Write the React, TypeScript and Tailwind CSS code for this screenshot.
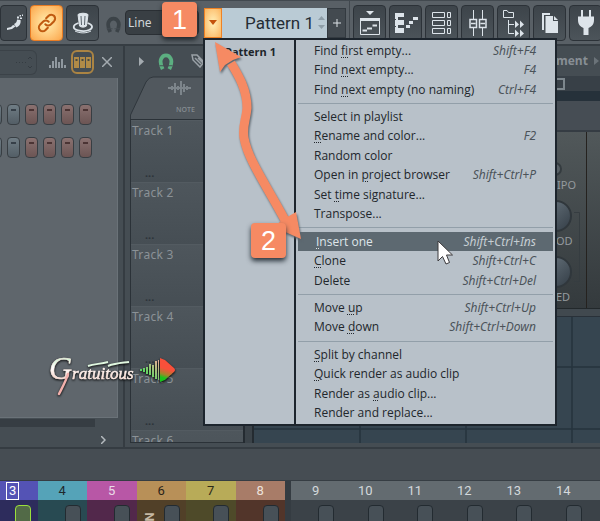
import React from 'react';

interface MenuRow {
  label: string;
  // index of the underlined access key, -1 for none
  mark: number;
  keys?: string;
  active?: boolean;
}

const menuGroups: MenuRow[][] = [
  [
    { label: 'Find first empty...', mark: 5, keys: 'Shift+F4' },
    { label: 'Find next empty...', mark: 5, keys: 'F4' },
    { label: 'Find next empty (no naming)', mark: 5, keys: 'Ctrl+F4' },
  ],
  [
    { label: 'Select in playlist', mark: -1 },
    { label: 'Rename and color...', mark: 0, keys: 'F2' },
    { label: 'Random color', mark: -1 },
    { label: 'Open in project browser', mark: 8, keys: 'Shift+Ctrl+P' },
    { label: 'Set time signature...', mark: 4 },
    { label: 'Transpose...', mark: -1 },
  ],
  [
    { label: 'Insert one', mark: 0, keys: 'Shift+Ctrl+Ins', active: true },
    { label: 'Clone', mark: 0, keys: 'Shift+Ctrl+C' },
    { label: 'Delete', mark: -1, keys: 'Shift+Ctrl+Del' },
  ],
  [
    { label: 'Move up', mark: 5, keys: 'Shift+Ctrl+Up' },
    { label: 'Move down', mark: 5, keys: 'Shift+Ctrl+Down' },
  ],
  [
    { label: 'Split by channel', mark: 0 },
    { label: 'Quick render as audio clip', mark: 0 },
    { label: 'Render as audio clip...', mark: 10 },
    { label: 'Render and replace...', mark: -1 },
  ],
];

const tracks = ['Track 1', 'Track 2', 'Track 3', 'Track 4', 'Track 5', 'Track 6'];

const colorSteps = [
  { n: 3, head: 'bg-[#5453b5] text-white', body: 'bg-[#2d2c5c]' },
  { n: 4, head: 'bg-[#55a3b8] text-[#20282c]', body: 'bg-[#284a52]' },
  { n: 5, head: 'bg-[#b857a6] text-[#eadbe8]', body: 'bg-[#52284b]' },
  { n: 6, head: 'bg-[#b89058] text-[#2b2418]', body: 'bg-[#514028]' },
  { n: 7, head: 'bg-[#b8ab58] text-[#2b2918]', body: 'bg-[#4e4a29]' },
  { n: 8, head: 'bg-[#a87c68] text-[#eee2dc]', body: 'bg-[#52352a]' },
];

const plainSteps = [9, 10, 11, 12, 13, 14];

const ToolButton: React.FC<{ label: string; className?: string; children: React.ReactNode }> = ({ label, className, children }) => (
  <button
    type="button"
    aria-label={label}
    className={`h-9 shrink-0 flex items-center justify-center rounded-sm border border-[#2c3238] text-[#dde4ea] ${className ?? 'w-[33px] bg-linear-to-b from-[#3d444a] to-[#4c545a]'}`}
  >
    {children}
  </button>
);

const Magnet: React.FC<{ className: string }> = ({ className }) => (
  <svg viewBox="0 0 16 18" className={className} fill="none" stroke="currentColor" strokeWidth="4">
    <path d="M4.5 17 C2 12 1.5 9 3 6 C5 1.5 11 1.5 13 6 C14.500 9 14 12 11.500 17" />
    <path d="M1 13.500 H7 M9 13.500 H15" stroke="#444c52" strokeWidth="1" />
  </svg>
);

const Toolbar: React.FC = () => (
  <header className="h-[46px] flex items-center border-t border-b-2 border-t-[#42494f] border-b-[#363d43] bg-[#596066] overflow-hidden">
    <div className="flex gap-[3px] shrink-0">
      <ToolButton label="Typing keyboard" className="w-[27px] bg-[#434a50]">
        <svg viewBox="0 0 20 20" className="w-5 h-5" fill="currentColor">
          <path d="M3 17 L3 15 L7 14 L9 12 L12 13 L8 16 Z" />
          <path d="M10 11 C12 10 13 8.500 13 6.500 L16.500 7 C17 10 16 13 12.500 14.500 Z" />
          <path d="M13 3.500 H15 V5.500 H13 Z M15.500 2 H17 V3.500 H15.500 Z M16 4.500 H18 V6 H16 Z M18 1.500 H19 V3 H18 Z" />
        </svg>
      </ToolButton>
      <ToolButton label="Link" className="w-[33px] bg-radial from-[#fff0b0] to-[#fba648] !border-[#e87c24] !text-[#c05a10]">
        <svg viewBox="0 0 24 24" className="w-5 h-5" fill="none" stroke="currentColor" strokeWidth="2.500" strokeLinecap="round">
          <path d="M10 13.500 a4.500 4.500 0 0 0 6.500 .3 l4-4 a4.600 4.600 0 0 0 -6.500 -6.500 l-3 3" />
          <path d="M14 10.500 a4.500 4.500 0 0 0 -6.500 -.3 l-4 4 a4.600 4.600 0 0 0 6.500 6.500 l3 -3" />
        </svg>
      </ToolButton>
      <ToolButton label="Magic hat">
        <svg viewBox="0 0 22 22" className="w-[22px] h-[22px]" fill="none" stroke="currentColor">
          <path d="M6 2.500 L7.500 14 C9 15.500 13 15.500 14.500 14 L16 2.500 C14 .8 8 .8 6 2.500 Z" fill="currentColor" />
          <path d="M9 4 L9.500 13 M13 4 L12.500 13" stroke="#59636b" />
          <path d="M6.500 11 C0 13 .5 17 6 18.300 C10 19.300 14 19.300 17 18 C21.500 16 21 12.500 15.500 11" strokeWidth="1.800" />
          <path d="M3 19 C8 21.500 14 21.500 19 19" />
        </svg>
      </ToolButton>
    </div>
    <Magnet className="w-[15px] h-[17px] mt-1 ml-[7px] shrink-0 text-[#3c4348]" />
    <label className="sr-only" htmlFor="snap">Snap</label>
    <select
      id="snap"
      defaultValue="Line"
      className="appearance-none ml-[4px] w-[74px] h-[25px] shrink-0 pl-[2px] rounded-sm border border-[#2a2f34] bg-[#393f44] text-[#d0d5d9] text-[12px] font-['Noto_Sans']"
    >
      <option>Line</option>
    </select>
    <div className="flex h-[30px] ml-[5px] shrink-0">
      <button type="button" aria-label="Pattern menu" className="w-[18px] flex items-center justify-center border border-[#ee8225] bg-radial from-[#fff0b8] to-[#fbb45c]">
        <svg viewBox="0 0 8 5" className="w-2 h-[5px]" fill="#c4520c"><path d="M0 0 H8 L4 5 Z" /></svg>
      </button>
      <div className="w-[105px] flex items-center justify-end gap-1 pr-[2px] bg-[#bacbd5] text-[#252d35]">
        <span className="text-[17px] leading-6 whitespace-nowrap font-['Roboto',sans-serif]">Pattern 1</span>
        <svg viewBox="0 0 7 13" className="w-[7px] h-[13px]" fill="#8e9ea8"><path d="M0 4 L3.500 0 L7 4 Z M0 9 L3.500 13 L7 9 Z" /></svg>
      </div>
      <button type="button" aria-label="Add pattern" className="w-[19px] flex items-center justify-center border border-[#333a40] bg-[#434a50]">
        <svg viewBox="0 0 8 8" className="w-2 h-2" stroke="#dde2e6" strokeWidth="1"><path d="M4 0 V8 M0 4 H8" /></svg>
      </button>
    </div>
    <div className="w-px h-full ml-[3px] shrink-0 bg-[#41484e]" />
    <div className="flex gap-[3px] ml-[3px] shrink-0">
      <ToolButton label="Playlist">
        <svg viewBox="0 0 22 26" className="w-[22px] h-[26px]" fill="none" stroke="currentColor">
          <path d="M7 1 H15 L11 5 Z" fill="currentColor" stroke="none" />
          <path d="M1.500 9 H20.500 V24.500 H1.500 Z" />
          <path d="M1 9.500 H21" strokeWidth="3" />
          <path d="M3.500 20.500 H8 M8 18.500 H13 M13.500 15.500 H18" strokeWidth="2" />
        </svg>
      </ToolButton>
      <ToolButton label="Piano roll">
        <svg viewBox="0 0 24 20" className="w-6 h-5" fill="currentColor">
          <path d="M1 0 H10 V4 H4 V7 H10 V12 H4 V15 H10 V20 H1 V14 H2 V13 H1 V7 H2 V6 H1 Z" />
          <path d="M12 12 H16 V15 H12 Z M15 8 H19 V11 H15 Z M19 4 H24 V7 H19 Z" />
        </svg>
      </ToolButton>
      <ToolButton label="Channel rack">
        <svg viewBox="0 0 19 22" className="w-[19px] h-[22px]" fill="none" stroke="currentColor">
          <path d="M.5 .5 H12.500 V5.500 H.5 Z M.5 8.500 H12.500 V13.500 H.5 Z M.5 16.500 H12.500 V21.500 H.5 Z" />
          <path d="M15.500 .5 H18.500 V5.500 H15.500 Z M15.500 8.500 H18.500 V13.500 H15.500 Z M15.500 16.500 H18.500 V21.500 H15.500 Z" />
        </svg>
      </ToolButton>
      <ToolButton label="Mixer">
        <svg viewBox="0 0 18 26" className="w-[18px] h-[26px]" fill="none" stroke="currentColor">
          <path d="M1 9.500 H7.500 V17.500 H1 Z M10.500 9.500 H17 V17.500 H10.500 Z M2 13.500 H6.500 M11.500 13.500 H16" strokeWidth="1.500" />
          <path d="M4.500 0 V9 M13.500 0 V9 M4.500 18 V26 M13.500 18 V26" />
        </svg>
      </ToolButton>
      <ToolButton label="Browser">
        <svg viewBox="0 0 22 28" className="w-[22px] h-7" fill="none" stroke="currentColor">
          <path d="M.5 1.500 H4 L5.500 3.500 H10.500 V8.500 H.5 Z M5.500 11 V24.500 H11 M5.500 15.500 H11" />
          <path d="M12 11.500 L16 15.500 L12 19 Z M17 11.500 L21 15.500 L17 19 Z M12 20.500 L16 24.500 L12 28 Z M17 20.500 L21 24.500 L17 28 Z" fill="currentColor" stroke="none" />
        </svg>
      </ToolButton>
      <ToolButton label="Project files">
        <svg viewBox="0 0 18 22" className="w-[18px] h-[22px]" fill="currentColor">
          <path d="M1 1 H9 V3 H3 V18 H1 Z" />
          <path d="M4.500 4 H12 V9 H17 V21 H4.500 Z M13 4 L17 8 H13 Z" />
        </svg>
      </ToolButton>
      <ToolButton label="Plugins">
        <svg viewBox="0 0 16 26" className="w-4 h-[26px]" fill="currentColor">
          <path d="M3 0 H5 V7 H3 Z M11 0 H13 V7 H11 Z M0 6.500 H16 V10 C16 15 13 17 10.500 18 V25 H5.500 V18 C3 17 0 15 0 10 Z" />
        </svg>
      </ToolButton>
    </div>
  </header>
);

const Pads: React.FC = () => (
  <div className="flex gap-[5px] -ml-[11px]">
    {[0, 1, 2, 3, 4, 5].map(i => (
      <div
        key={i}
        className={`w-[13px] h-[21px] shrink-0 pt-1 px-[3px] rounded-sm border border-[#383e43] ${i < 2 ? 'bg-linear-to-b from-[#707d85] to-[#535e66]' : 'bg-linear-to-b from-[#8a7170] to-[#6c5554]'}`}
      >
        <div className={i < 2 ? 'h-[2px] bg-[#363f48]' : 'h-[2px] bg-[#4b3434]'} />
      </div>
    ))}
  </div>
);

const ChannelRack: React.FC = () => (
  <section className="w-[123px] shrink-0 flex flex-col bg-[#454d53] overflow-hidden">
    <div className="h-8 flex items-center">
      <div className="w-[37px] h-[25px] flex items-center justify-end pr-[3px] rounded-r-md border border-l-0 border-[#3b4248] text-[#353c42]">
        <svg viewBox="0 0 17 13" className="w-[17px] h-[13px]" fill="none" stroke="currentColor">
          <path d="M0 6.500 H11" strokeDasharray="1 2" />
          <path d="M12 3 L14 1 L16 3 M12 10 L14 12 L16 10" />
        </svg>
      </div>
      <svg viewBox="0 0 17 12" className="w-[17px] h-3 ml-3" stroke="#9099a0" strokeWidth="2">
        <path d="M1 9 V12 M4 5 V12 M7 1 V12 M10 6 V12 M13 3 V12 M16 9 V12" />
      </svg>
      <div className="w-[23px] h-6 ml-[5px] flex items-center justify-center rounded-md border-2 border-[#ab8443]">
        <svg viewBox="0 0 17 11" className="w-[17px] h-[11px]" fill="#b18b47">
          <path d="M0 0 H5 V11 H0 Z M6 0 H11 V11 H6 Z M12 0 H17 V11 H12 Z" />
          <path d="M1.500 2 H3.500 V4 H1.500 Z M7.500 2 H9.500 V4 H7.500 Z M13.500 2 H15.500 V4 H13.500 Z" fill="#4a4a40" />
        </svg>
      </div>
      <svg viewBox="0 0 10 10" className="w-[10px] h-[10px] ml-2" stroke="#a4abb0" strokeWidth="1.500"><path d="M0 0 L10 10 M10 0 L0 10" /></svg>
    </div>
    <div className="h-[340px] mr-[5px] pt-[26px] flex flex-col gap-3 border-r border-b border-[#6a7278] bg-[#5f666c]">
      <Pads />
      <Pads />
    </div>
    <div className="h-2 w-[95px] mt-px bg-[#363d43]" />
    <div className="flex-1 flex items-center justify-end pt-[6px] pr-[17px]">
      <svg viewBox="0 0 5 8" className="w-[5px] h-2" fill="none" stroke="#b4babe" strokeWidth="1.500"><path d="M0 0 L4 4 L0 8" /></svg>
    </div>
  </section>
);

const Knob: React.FC = () => (
  <div className="w-8 h-8 shrink-0 -ml-[14px] rounded-full border-2 border-[#30373c] bg-linear-to-br from-[#6b7780] to-[#353f48]" />
);

const PluginPanel: React.FC = () => (
  <div className="h-[271px] flex flex-col pl-[311px]">
    <div className="h-[30px] flex items-center gap-[6px] pl-[2px] text-[#888f95] text-[12px] font-bold font-['Open_Sans']">
      <span>ment</span>
      <svg viewBox="0 0 5 8" className="w-[5px] h-2" fill="#6b7379"><path d="M0 0 L5 4 L0 8 Z" /></svg>
    </div>
    <div className="h-[15px] flex items-center bg-[#384047]">
      <div className="w-[11px] h-3 border-2 border-[#7d878d]" />
    </div>
    <div className="h-[10px] bg-[#26313a]" />
    <div className="h-[31px] border-b-2 border-[#353c43] bg-[#464d54]" />
    <div className="h-[177px] flex border-b border-[#22282b] bg-linear-to-b from-[#51585a] to-[#343a3d] overflow-hidden">
      <div className="w-[33px] shrink-0 flex flex-col pt-[30px] border-r border-[#25221f] text-[11px] leading-4 text-[#949a9e] font-['Noto_Sans']">
        <div className="w-[14px] h-[14px] -ml-[6px] rounded-full border-2 border-[#343b3f] bg-[#596166]" />
        <span className="h-6 pt-px pl-[3px]">IPO</span>
        <div className="relative">
          <Knob />
          <svg viewBox="0 0 6 70" className="absolute left-[20px] top-[12px] w-[6px] h-[70px]" fill="none" stroke="#363d41">
            <path d="M0 .5 H5.500 V69.500 H0" />
          </svg>
        </div>
        <span className="h-6 pt-px pl-[2px]">OD</span>
        <Knob />
        <span className="pt-px pl-[2px]">ED</span>
      </div>
    </div>
    <div className="flex-1 border-b border-[#293139] bg-[#41494f]" />
  </div>
);

const Playlist: React.FC = () => (
  <section className="flex-1 min-w-0 flex border-l-2 border-[#353c42] bg-[#454d53]">
    <div className="w-[118px] shrink-0 pl-[5px] flex flex-col">
      <div className="h-[30px] flex items-center gap-[14px] pl-[9px]">
        <svg viewBox="0 0 5 9" className="w-[5px] h-[9px]" fill="#a4abb0"><path d="M0 0 L5 4.500 L0 9 Z" /></svg>
        <Magnet className="w-4 h-[17px] text-[#5caf81]" />
        <svg viewBox="0 0 14 14" className="w-[14px] h-[14px] ml-[3px]" fill="none" stroke="#9aa1a7" strokeWidth="1.500">
          <path d="M1 1 H6 L13 8 L9 13 L2 6 Z M4 4 L10 10 M7 4 L12 9" />
        </svg>
      </div>
      <div className="h-[43px] overflow-hidden">
        <svg viewBox="0 0 122 44" className="w-[122px] h-[44px]" fill="none">
          <path d="M0.500 44 V39 L16 6 Q19 1 23 1 H122 V44 Z" fill="#51585e" stroke="#30373d" />
          <path d="M38 12 H61 M42 10 V14 M45 7 V17 M48 10 V14 M51 5 V19 M54 8 V16 M57 10 V14" stroke="#7d858b" strokeWidth="2" />
          <text x="46" y="36" fill="#858c91" fontSize="7" fontFamily="Open Sans" fontWeight="600">NOTE</text>
        </svg>
      </div>
      <div className="h-[324px] overflow-hidden border-l border-y border-[#2b3238]">
        {tracks.map(t => (
          <div key={t} className="h-[62px] flex flex-col justify-between pl-px border-t border-[#535b61] bg-linear-to-b from-[#4e565c] to-[#464e54]">
            <span className="text-[12px] leading-4 mt-[2px] tracking-wide text-[#8b9297] font-['Noto_Sans']">{t}</span>
            <span className="pl-[13px] pb-[6px] text-[11px] leading-[7px] font-bold text-[#2d343a]">...</span>
          </div>
        ))}
      </div>
    </div>
    <div className="flex-1 min-w-0 flex flex-col">
      <PluginPanel />
      <div className="h-[126px] flex">
        <div className="w-[11px] border-x-2 border-[#242b31] bg-[#3b4349]" />
        <svg className="flex-1 h-full bg-[#364550]" stroke="#26333d" strokeWidth="1.500">
          <path d="M106 0 V127 M212 0 V127 M318 0 V127 M0 50 H900 M0 112 H900" />
        </svg>
      </div>
    </div>
  </section>
);

const StepPad: React.FC<{ on?: boolean }> = ({ on }) => (
  <div className={`w-4 h-5 ml-[27px] mt-[5px] rounded-t-sm border ${on ? 'border-[#9be03c] bg-[#526a47]' : 'border-[#232b31] bg-[#475057]'}`} />
);

const StepGrid: React.FC = () => (
  <section className="flex overflow-hidden text-[13px] font-['Roboto',sans-serif]">
    <div className="w-[297px] -ml-3 shrink-0 grid grid-cols-6">
      {colorSteps.map(s => (
        <div key={s.n} className={`h-10 overflow-hidden ${s.body}`}>
          <div className={`h-[19px] flex items-center justify-center ${s.head}`}>
            <span className={s.n === 3 ? 'px-[2px] leading-4 border border-white' : 'leading-4'}>{s.n}</span>
          </div>
          <div className="relative">
            <StepPad on={s.n === 3} />
            {s.n === 6 && (
              <span className="absolute left-2 top-[6px] -rotate-90 leading-3 font-bold text-[#c5b8a4]">N</span>
            )}
          </div>
        </div>
      ))}
    </div>
    <div className="w-[6px] shrink-0 bg-[#353c42]" />
    <div className="w-[297px] shrink-0 grid grid-cols-6">
      {plainSteps.map(n => (
        <div key={n} className="h-10 overflow-hidden bg-[#3b4248]">
          <div className="h-[19px] flex items-center justify-center bg-[#636b70] text-[#d4d9dc]">{n}</div>
          <StepPad />
        </div>
      ))}
    </div>
    <div className="flex-1 border-t-[19px] border-[#636b70] bg-[#3b4248]" />
  </section>
);

const MenuItem: React.FC<{ row: MenuRow }> = ({ row }) => (
  <button
    type="button"
    className={`flex-1 w-full flex items-center justify-between pr-[17px] text-left whitespace-nowrap ${row.active ? 'pl-[18px] bg-[#5d6971] text-[#dfe6ea]' : 'pl-4 text-[#22272c]'}`}
  >
    <span>
      {row.mark < 0 ? row.label : (
        <>
          {row.label.slice(0, row.mark)}
          <span className="underline decoration-dotted decoration-1 underline-offset-2">{row.label[row.mark]}</span>
          {row.label.slice(row.mark + 1)}
        </>
      )}
    </span>
    {row.keys && <span className={`italic font-['Noto_Sans'] ${row.active ? 'text-[#c6ced3]' : 'text-[#4b5359]'}`}>{row.keys}</span>}
  </button>
);

const PatternMenu: React.FC = () => (
  <div className="absolute left-[203px] top-[38px] w-[354px] h-[388px] flex border-2 border-[#1d252d] bg-[#b8c1c9] text-[12px] leading-4 font-['Open_Sans']">
    <div className="w-[91px] shrink-0 pt-1 pl-5 border-r-2 border-[#1d252d] font-bold text-[#20252a] text-[11px]">Pattern 1</div>
    <div className="flex-1 flex flex-col pl-[2px] pr-[2px] py-px">
      {menuGroups.map((group, i) => (
        <React.Fragment key={i}>
          {i > 0 && <div className="h-2 shrink-0 flex items-center"><div className="h-px w-full bg-[#929fa9]" /></div>}
          {group.map(row => <MenuItem key={row.label} row={row} />)}
        </React.Fragment>
      ))}
    </div>
  </div>
);

const Logo: React.FC = () => (
  <svg viewBox="0 0 130 50" className="absolute left-[48px] top-[348px] w-[130px] h-[50px] drop-shadow-[0_1px_1px_#000]">
    <defs>
      <linearGradient id="ink" x1="0" y1="0" x2="0" y2="1">
        <stop offset="0.200" stopColor="#c8f4cc" />
        <stop offset="0.500" stopColor="#ffffff" />
        <stop offset="1" stopColor="#f6b7a4" />
      </linearGradient>
      <linearGradient id="arrowhead" x1="0.500" y1="0" x2="0.300" y2="1">
        <stop offset="0.450" stopColor="#f8503a" />
        <stop offset="0.700" stopColor="#a0862a" />
        <stop offset="0.850" stopColor="#18c41c" />
      </linearGradient>
      <linearGradient id="wave" x1="0" y1="1" x2="1" y2="0">
        <stop offset="0.300" stopColor="#58d860" />
        <stop offset="1" stopColor="#f0a898" />
      </linearGradient>
    </defs>
    <text x="1" y="31" fill="url(#ink)" stroke="#fff0ea" strokeWidth="0.500" fontFamily="Liberation Serif" fontStyle="italic" fontSize="17">
      <tspan fontSize="32">G</tspan>ratuitous
    </text>
    <path d="M40 18 C46 16 52 16 60 14 M60 18 C68 15 74 15 81 14" stroke="#e0f8e0" strokeWidth="2" fill="none" />
    <path d="M20 26 C18 33 14 40 11 46" stroke="#f2b0ac" strokeWidth="2.500" fill="none" strokeLinecap="round" />
    <path d="M92 21 H94 V23 H92 Z M95 20 H97 V24 H95 Z M98 19 H100 V26 H98 Z M101 16 H103 V27 H101 Z M104 17 H106 V29 H104 Z M107 13 H109 V31 H107 Z M110 12 H111 V32 H110 Z" fill="url(#wave)" />
    <path d="M112 10 L117 12 L126 20 Q128 22 126 24 L117 32 L112 34 Z" fill="url(#arrowhead)" />
  </svg>
);

const Callouts: React.FC = () => (
  <>
    <svg viewBox="0 0 100 220" className="absolute left-[205px] top-[36px] w-[100px] h-[220px] drop-shadow-[1px_2px_1px_#59636b]" fill="none">
      <path d="M26 27 C34 40 42 54 42 72 C41 84 37 90 39 102 C43 124 62 150 81 186" stroke="#f68a63" strokeWidth="9" />
      <path d="M10 6 L36 21 L28 24 L20 29 L15 36 Z M91 176 L96 203 L69 191 L77 184 Z" fill="#f68a63" />
    </svg>
    <div className="absolute left-[251px] top-[223px] w-[35px] h-[35px] flex items-center justify-center rounded-sm bg-[#f68a63] text-white text-[27px] leading-8 shadow-[0_3px_5px_#29333b] font-['Liberation_Sans']">2</div>
    <div className="absolute left-[162px] top-[2px] w-[35px] h-[35px] flex items-center justify-center rounded-sm bg-[#f68a63] text-white text-[27px] leading-8 shadow-[0_3px_5px_#20262b] font-['Liberation_Sans']">1</div>
    <svg viewBox="0 0 17 25" className="absolute left-[437px] top-[240px] w-[17px] h-[25px]">
      <path d="M1 1 V21 L5.500 16.500 L9 24 L12.500 22.500 L9.500 15 H15.500 Z" fill="#fff" stroke="#3c3a3c" />
    </svg>
  </>
);

export default function App() {
  return (
    <main className="relative w-full overflow-hidden bg-[#454d53]">
      <Toolbar />
      <div className="flex h-[403px] border-b-2 border-[#353c42]">
        <ChannelRack />
        <Playlist />
      </div>
      <div className="h-8 border-b border-[#363d43] bg-[#464d53]" />
      <StepGrid />
      <PatternMenu />
      <Logo />
      <Callouts />
    </main>
  );
}
